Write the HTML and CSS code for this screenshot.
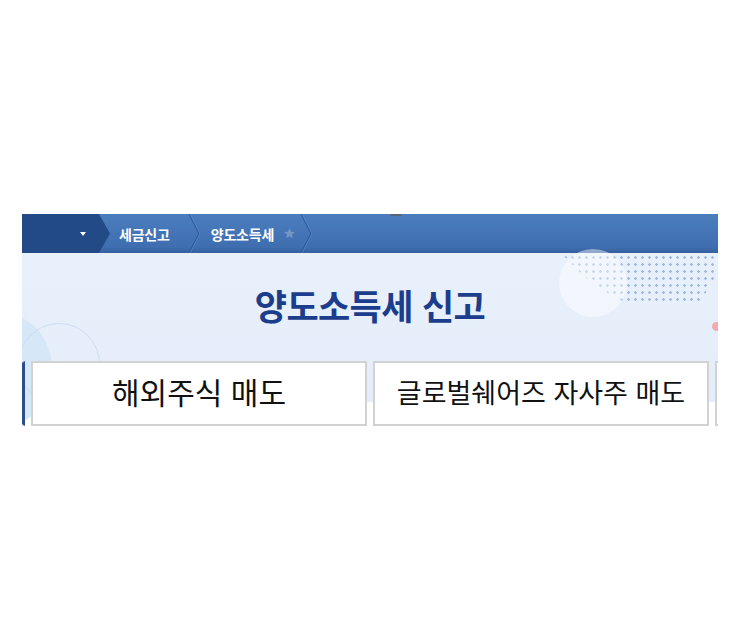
FILE: index.html
```html
<!DOCTYPE html>
<html lang="ko">
<head>
<meta charset="utf-8">
<title>양도소득세 신고</title>
<link rel="stylesheet" href="styles.css">
</head>
<body>
<div class="frame">
  <span class="blip"></span>
  <nav class="crumbs">
    <div class="home"><span class="caret"></span></div>
    <span class="crumb first">세금신고</span>
    <svg class="sep" width="12" height="39" viewBox="0 0 12 39"><polyline points="1,0 11,19.5 1,39" fill="none" stroke="#2d5b9c" stroke-width="1.2"/><polyline points="2,0 12,19.5 2,39" fill="none" stroke="#6d97cf" stroke-width="0.8" opacity="0.6"/></svg>
    <span class="crumb second">양도소득세</span>
    <svg class="star" width="13" height="13" viewBox="0 0 24 24"><path d="M12 2l2.9 6.6 7.1.6-5.4 4.7 1.6 7-6.2-3.7-6.2 3.7 1.6-7L2 9.2l7.1-.6z" fill="#7595c4"/></svg>
    <svg class="sep last" width="12" height="39" viewBox="0 0 12 39"><polyline points="1,0 11,19.5 1,39" fill="none" stroke="#2d5b9c" stroke-width="1.2"/><polyline points="2,0 12,19.5 2,39" fill="none" stroke="#6d97cf" stroke-width="0.8" opacity="0.6"/></svg>
  </nav>
  <section class="banner">
    <span class="deco dots"></span>
    <span class="deco glow"></span>
    <span class="deco pink"></span>
    <span class="deco blob"></span>
    <span class="deco ring"></span>
    <h1 class="title">양도소득세 신고</h1>
    <div class="cards">
      <div class="card prev"></div>
      <div class="card">해외주식 매도</div>
      <div class="card small">글로벌쉐어즈 자사주 매도</div>
      <div class="card"></div>
    </div>
  </section>
</div>
</body>
</html>
```

FILE: styles.css
```css
html, body {
  margin: 0;
  padding: 0;
  background: #ffffff;
}
body {
  font-family: "Noto Sans CJK KR", "Noto Sans", sans-serif;
}
.frame {
  position: relative;
  margin: 214px 0 0 22px;
  width: 696px;
  overflow: hidden;
}
.blip {
  position: absolute;
  left: 368px;
  top: 0;
  width: 12px;
  height: 2px;
  border-radius: 1px;
  background: #5a6478;
  z-index: 3;
}
.crumbs {
  display: flex;
  align-items: center;
  height: 39px;
  background: linear-gradient(#4b7dbd, #3f6eb0 85%, #365f9e);
  color: #ffffff;
}
.home {
  width: 88px;
  height: 39px;
  flex: none;
  background: #214a86;
  clip-path: polygon(0 0, 77px 0, 88px 50%, 77px 100%, 0 100%);
  position: relative;
}
.caret {
  position: absolute;
  left: 58px;
  top: 18px;
  width: 0;
  height: 0;
  border-left: 3.5px solid transparent;
  border-right: 3.5px solid transparent;
  border-top: 4px solid #ffffff;
}
.crumb {
  font-size: 14px;
  font-weight: 700;
  letter-spacing: -0.2px;
  white-space: nowrap;
}
.crumb.first {
  margin-left: 9px;
  margin-right: 18px;
}
.crumb.second {
  margin-left: 11px;
}
.sep {
  flex: none;
  display: block;
}
.star {
  flex: none;
  margin-left: 9px;
  margin-right: 4px;
}
.banner {
  position: relative;
  background: linear-gradient(#e8f0fb, #e5edfa 148px, #ffffff 150px);
  padding-top: 31px;
  padding-bottom: 1px;
}
.deco {
  position: absolute;
  pointer-events: none;
}
.dots {
  left: 540px;
  top: 1px;
  width: 160px;
  height: 50px;
  background-image: radial-gradient(circle, #9fb8e2 1.1px, transparent 1.5px);
  background-size: 7px 7px;
  clip-path: polygon(0 0, 100% 0, 100% 30%, 85% 100%, 38% 100%, 12% 40%);
}
.glow {
  left: 537px;
  top: -4px;
  width: 68px;
  height: 68px;
  border-radius: 50%;
  background: rgba(255, 255, 255, 0.45);
}
.pink {
  left: 690px;
  top: 69px;
  width: 9px;
  height: 9px;
  border-radius: 50%;
  background: #f3aab2;
}
.blob {
  left: -60px;
  top: 62px;
  width: 90px;
  height: 110px;
  border-radius: 50%;
  background: #d6e7f7;
}
.ring {
  left: -4px;
  top: 70px;
  width: 80px;
  height: 80px;
  border-radius: 50%;
  border: 1px solid rgba(200, 215, 240, 0.8);
}
.title {
  position: relative;
  margin: 0;
  text-align: center;
  font-size: 35px;
  line-height: 42px;
  font-weight: 700;
  color: #1b3d8b;
  letter-spacing: -0.6px;
}
.cards {
  position: relative;
  display: flex;
  gap: 6px;
  margin: 35px 0 0 -333px;
}
.card {
  flex: none;
  box-sizing: border-box;
  width: 336px;
  height: 65px;
  padding-bottom: 5px;
  background: #ffffff;
  border: 2px solid #d2d2d2;
  display: flex;
  align-items: center;
  justify-content: center;
  font-size: 30px;
  color: #111111;
  white-space: nowrap;
}
.card.small {
  font-size: 27px;
}
.card.prev {
  border-right: 3px solid #2a4f8a;
}
```
